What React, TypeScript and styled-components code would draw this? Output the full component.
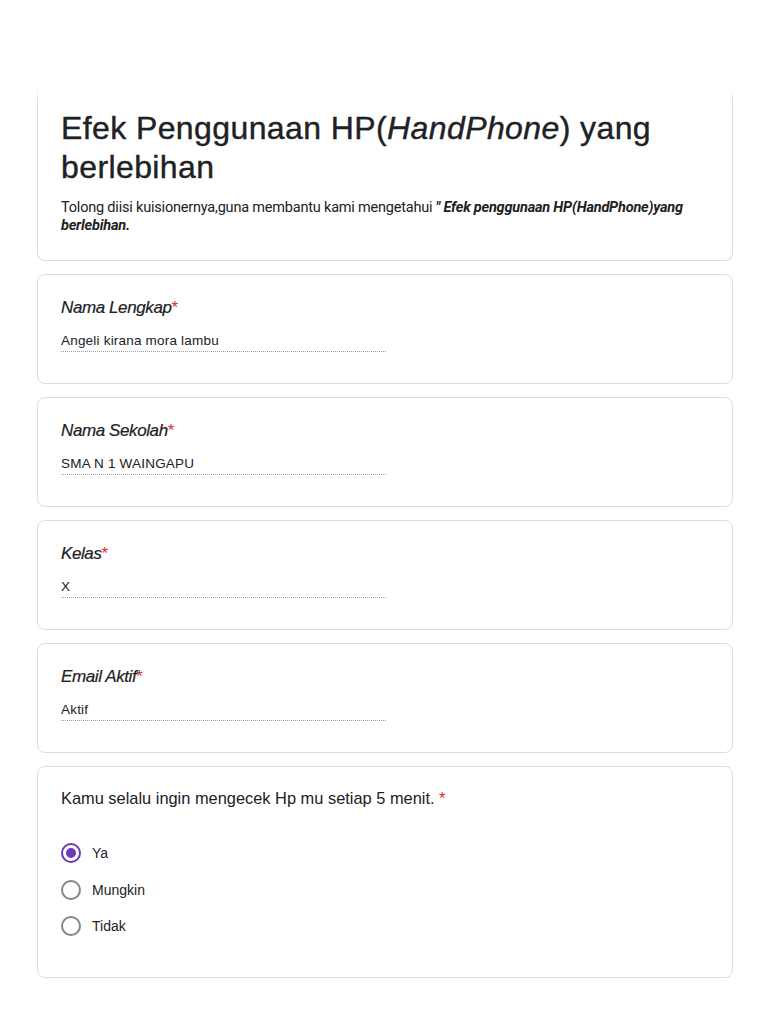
import { FC } from "react";
import styled, { createGlobalStyle } from "styled-components";

const GlobalStyle = createGlobalStyle`
  body {
    margin: 0;
    background: #ffffff;
    color: #202124;
    font-family: "Liberation Sans", Arial, sans-serif;
  }
`;

interface FieldProps {
  label: string;
  value: string;
}

const TextField: FC<FieldProps> = ({ label, value }) => (
  <StyledCard>
    <StyledLabel>
      {label}
      <StyledRequired>*</StyledRequired>
    </StyledLabel>
    <StyledValue>{value}</StyledValue>
  </StyledCard>
);

interface RadioProps {
  label: string;
  checked?: boolean;
}

const RadioOption: FC<RadioProps> = ({ label, checked }) => (
  <StyledOption>
    <StyledRadio $checked={!!checked} />
    <span>{label}</span>
  </StyledOption>
);

const App: FC = () => {
  const fields: FieldProps[] = [
    { label: "Nama Lengkap", value: "Angeli kirana mora lambu" },
    { label: "Nama Sekolah", value: "SMA N 1 WAINGAPU" },
    { label: "Kelas", value: "X" },
    { label: "Email Aktif", value: "Aktif" },
  ];

  return (
    <>
      <GlobalStyle />
      <StyledPage>
        <StyledHeader>
          <StyledTitle>
            Efek Penggunaan HP(<em>HandPhone</em>) yang berlebihan
          </StyledTitle>
          <StyledDescription>
            Tolong diisi kuisionernya,guna membantu kami mengetahui{" "}
            <strong>
              <em>" Efek penggunaan HP(HandPhone)yang berlebihan.</em>
            </strong>
          </StyledDescription>
        </StyledHeader>

        {fields.map((f) => (
          <TextField key={f.label} label={f.label} value={f.value} />
        ))}

        <StyledQuestionCard>
          <StyledQuestion>
            Kamu selalu ingin mengecek Hp mu setiap 5 menit.{" "}
            <StyledRequired>*</StyledRequired>
          </StyledQuestion>
          <StyledOptions>
            <RadioOption label="Ya" checked />
            <RadioOption label="Mungkin" />
            <RadioOption label="Tidak" />
          </StyledOptions>
        </StyledQuestionCard>
      </StyledPage>
    </>
  );
};

const StyledPage = styled.div`
  display: flex;
  flex-direction: column;
  gap: 13px;
  width: 696px;
  margin-left: 37px;
  padding-top: 88px;
  padding-bottom: 40px;
`;

const StyledCard = styled.div`
  position: relative;
  display: flex;
  flex-direction: column;
  box-sizing: border-box;
  border: 1px solid #dadce0;
  border-radius: 8px;
  background: #ffffff;
  padding: 21px 23px 31px;
`;

const StyledHeader = styled(StyledCard)`
  border-top-color: transparent;
  border-top-left-radius: 0;
  border-top-right-radius: 0;
  padding: 20px 23px 25px;

  &::before {
    content: "";
    position: absolute;
    left: -2px;
    right: -2px;
    top: -1px;
    height: 14px;
    background: linear-gradient(#ffffff, rgba(255, 255, 255, 0));
  }
`;

const StyledTitle = styled.h1`
  margin: 0;
  font-family: "Liberation Sans", Arial, sans-serif;
  font-weight: 400;
  font-size: 32px;
  line-height: 39px;
  letter-spacing: 0.4px;
  -webkit-text-stroke: 0.4px #202124;
  color: #202124;

  em {
    font-style: italic;
  }
`;

const StyledDescription = styled.p`
  margin: 12px 0 0;
  font-family: Roboto, "Liberation Sans", sans-serif;
  font-size: 14.5px;
  line-height: 18px;
  letter-spacing: -0.2px;
  color: #202124;
`;

const StyledLabel = styled.div`
  font-size: 17px;
  line-height: 24px;
  font-style: italic;
  letter-spacing: -0.4px;
  -webkit-text-stroke: 0.2px #202124;
  color: #202124;
`;

const StyledRequired = styled.span`
  color: #d93025;
  font-style: normal;
  -webkit-text-stroke: 0;
`;

const StyledValue = styled.div`
  margin-top: 13px;
  width: 325px;
  font-size: 13.5px;
  line-height: 16px;
  letter-spacing: 0.2px;
  padding-bottom: 2px;
  border-bottom: 1px dotted #9aa0a6;
  color: #202124;
`;

const StyledQuestionCard = styled(StyledCard)`
  padding: 19px 23px 41px;
`;

const StyledQuestion = styled.div`
  font-size: 16.4px;
  line-height: 24px;
  color: #202124;
`;

const StyledOptions = styled.div`
  display: flex;
  flex-direction: column;
  gap: 16.5px;
  margin-top: 33px;
`;

const StyledOption = styled.div`
  display: flex;
  align-items: center;
  gap: 11px;
  font-size: 14px;
  line-height: 20px;
  color: #202124;
`;

const StyledRadio = styled.span<{ $checked: boolean }>`
  position: relative;
  box-sizing: border-box;
  width: 20px;
  height: 20px;
  border-radius: 50%;
  border: 2px solid ${(p) => (p.$checked ? "#673ab7" : "#80868b")};
  flex-shrink: 0;

  &::after {
    content: "";
    display: ${(p) => (p.$checked ? "block" : "none")};
    position: absolute;
    left: 3px;
    top: 3px;
    width: 10px;
    height: 10px;
    border-radius: 50%;
    background: #673ab7;
  }
`;

export default App;
